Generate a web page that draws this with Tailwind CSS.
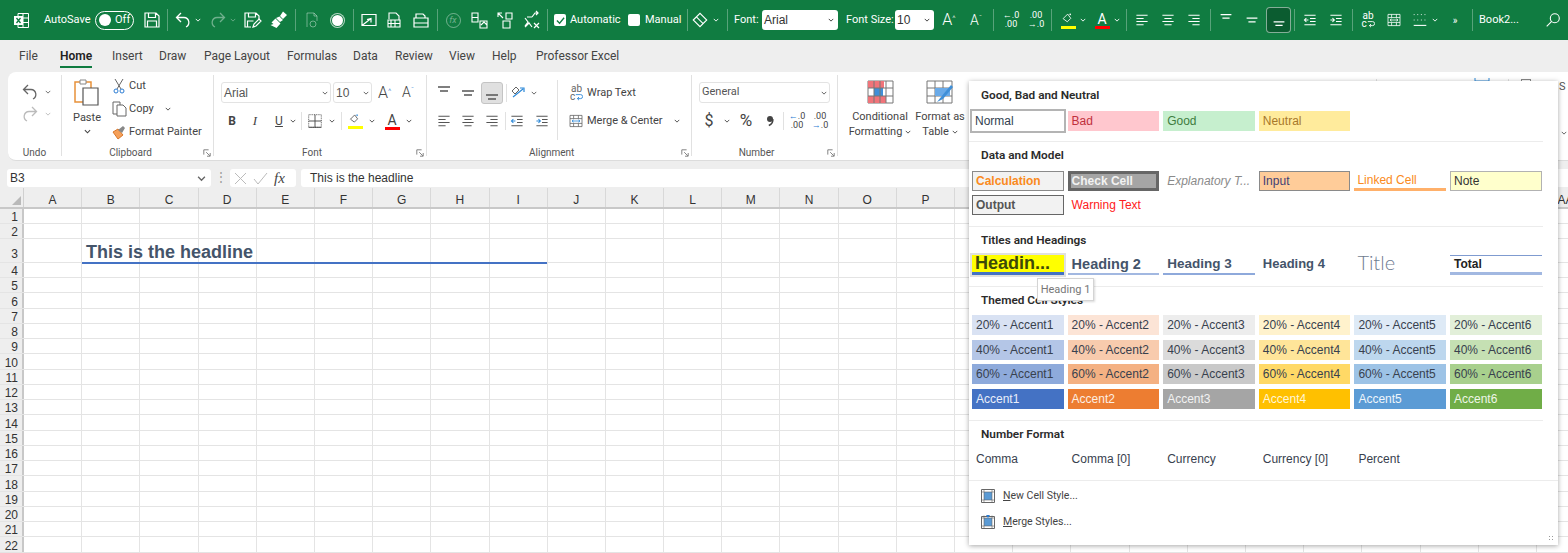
<!DOCTYPE html>
<html lang="en">
<head>
<meta charset="UTF-8" />
<title>Excel - Cell Styles</title>
<script src="https://cdn.jsdelivr.net/npm/@tailwindcss/browser@4"></script>
</head>
<body class="w-[1568px] h-[553px] overflow-hidden bg-[#eeeeee] font-['Roboto',sans-serif] text-[12px] text-[#444] [--accent:#2b88d8]">

<!-- shared icons -->
<svg class="hidden">
  <symbol id="undo" viewBox="0 0 20 20"><path d="M8 3 3.500 7.500 8 12M4 7.500h7a5 5 0 0 1 2 9.500" fill="none" stroke="currentColor" stroke-width="1.300"/></symbol>
  <symbol id="redo" viewBox="0 0 20 20"><path d="M12 3l4.500 4.500L12 12M16 7.500H9a5 5 0 0 0-2 9.500" fill="none" stroke="currentColor" stroke-width="1.300"/></symbol>
  <symbol id="chev" viewBox="0 0 8 8"><path d="M1 2.500 4 5.500 7 2.500" fill="none" stroke="currentColor" stroke-width="1.200"/></symbol>
  <symbol id="save" viewBox="0 0 20 20"><path d="M3 3h11l3 3v11H3zM6.500 3v4.500h7V3M5.500 17v-6h9v6" fill="none" stroke="currentColor" stroke-width="1.200"/></symbol>
  <symbol id="saveedit" viewBox="0 0 20 20"><path d="M9 17H3V3h11l3 3v3M6.500 3v4h7V3M5.500 17v-6h6" fill="none" stroke="currentColor" stroke-width="1.200"/><path d="M11 17l1-3 5-5 2 2-5 5z" fill="none" stroke="currentColor" stroke-width="1.200"/></symbol>
  <symbol id="brush" viewBox="0 0 20 20"><path d="M14 1.500l4 3.500-4 4-3-3zM10.500 6.500l3.500 3.500-3 2-4-4z" fill="currentColor"/><path d="M6.500 8.500l5 5-4 4.500-6-3 3-1-2-1.500z" fill="currentColor"/></symbol>
  <symbol id="docclip" viewBox="0 0 20 20"><path d="M5 17V3h7l3 3v5M12 3v3h3" fill="none" stroke="currentColor"/><circle cx="11" cy="14" r="3" fill="none" stroke="currentColor"/></symbol>
  <symbol id="envelope" viewBox="0 0 20 20"><path d="M3 4.500h14v11H3zM3 15.500l9-7M8 9.500l4-1 0 4" fill="none" stroke="currentColor" stroke-width="1.200"/></symbol>
  <symbol id="sheetclip" viewBox="0 0 20 20"><path d="M5 9V3h7l3 3v4M4 10h12v7H4zM7 10v7M4 13.500h12M11 10v7" fill="none" stroke="currentColor" stroke-width="1.100"/></symbol>
  <symbol id="tray" viewBox="0 0 20 20"><path d="M3 8h14v9H3zM5 8V4h7l2 2v2M3 13h14" fill="none" stroke="currentColor" stroke-width="1.200"/></symbol>
  <symbol id="tracea" viewBox="0 0 20 20"><path d="M3 3h6v9H3zM3 7.500h6M11 11h7v7h-7zM12 15l3-3 3 3" fill="none" stroke="currentColor" stroke-width="1.100"/></symbol>
  <symbol id="traceb" viewBox="0 0 20 20"><path d="M11 3h6v6h-6zM8 11h7v7H8zM3 3l5 5M3 7V3h4" fill="none" stroke="currentColor" stroke-width="1.100"/></symbol>
  <symbol id="fxarrow" viewBox="0 0 20 20"><path d="M5 7h5M10 7l3-4h3M14 1l2 2-2 2M3 17l4-4 3 4M3 8l3 4-3 4" fill="none" stroke="currentColor" stroke-width="1.200"/><path d="M12 13l5 5M17 13l-5 5" stroke="currentColor" stroke-width="1.200"/></symbol>
  <symbol id="eraser" viewBox="0 0 20 20"><path d="M2.500 10 10 2.500 17.500 10 10 17.500zM6 6.500 13.500 14" fill="none" stroke="currentColor" stroke-width="1.200"/></symbol>
  <symbol id="alt" viewBox="0 0 20 20"><path d="M4 4h12M6 8h8" stroke="currentColor" stroke-width="1.300"/></symbol>
  <symbol id="alm" viewBox="0 0 20 20"><path d="M4 8h12M6 12h8" stroke="currentColor" stroke-width="1.300"/></symbol>
  <symbol id="alb" viewBox="0 0 20 20"><path d="M4 12h12M6 16h8" stroke="currentColor" stroke-width="1.300"/></symbol>
  <symbol id="all" viewBox="0 0 20 20"><path d="M3 4h14M3 8h9M3 12h14M3 16h9" stroke="currentColor" stroke-width="1.300"/></symbol>
  <symbol id="alc" viewBox="0 0 20 20"><path d="M3 4h14M5.500 8h9M3 12h14M5.500 16h9" stroke="currentColor" stroke-width="1.300"/></symbol>
  <symbol id="alr" viewBox="0 0 20 20"><path d="M3 4h14M8 8h9M3 12h14M8 16h9" stroke="currentColor" stroke-width="1.300"/></symbol>
  <symbol id="outdent" viewBox="0 0 20 20"><path d="M3 4h14M10 8h7M10 12h7M3 16h14" stroke="currentColor" stroke-width="1.300"/><path d="M3 10h5M5.500 7.500 3 10l2.500 2.500" fill="none" stroke="var(--accent)" stroke-width="1.300"/></symbol>
  <symbol id="indent" viewBox="0 0 20 20"><path d="M3 4h14M10 8h7M10 12h7M3 16h14" stroke="currentColor" stroke-width="1.300"/><path d="M3 10h5M5.500 7.500 8 10l-2.500 2.500" fill="none" stroke="var(--accent)" stroke-width="1.300"/></symbol>
  <symbol id="merge" viewBox="0 0 20 20"><path d="M2.500 3h15v14h-15zM2.500 7h15M2.500 13h15M7 3v4M13 3v4M7 13v4M13 13v4" fill="none" stroke="currentColor"/><path d="M5 10h10M7 8.500 5 10l2 1.500M13 8.500l2 1.500-2 1.500" fill="none" stroke="var(--accent)"/></symbol>
  <symbol id="wraparrow" viewBox="0 0 10 10"><path d="M1 2h6a2 2 0 0 1 0 5H3M5 5 3 7l2 2" fill="none" stroke="var(--accent)" stroke-width="1.100"/></symbol>
  <symbol id="borders" viewBox="0 0 20 20"><path d="M3 3h14v14H3z" fill="none" stroke="currentColor" stroke-dasharray="1 1"/><path d="M3 10h14M10 3v14M3 17h14" fill="none" stroke="currentColor"/></symbol>
  <symbol id="dotted" viewBox="0 0 20 20"><path d="M3 4h14M3 10h14" fill="none" stroke="currentColor" stroke-dasharray="1 3"/><path d="M3 16h14" stroke="currentColor" stroke-width="1.200"/></symbol>
  <symbol id="bucket" viewBox="0 0 20 20"><path d="M3 9.500 9.500 3 14 9l-5 5z" fill="none" stroke="currentColor" stroke-width="1.200"/><path d="M11 3l3-1 .5 3z" fill="var(--accent)"/></symbol>
  <symbol id="search" viewBox="0 0 20 20"><circle cx="12" cy="8" r="5" fill="none" stroke="currentColor" stroke-width="1.200"/><path d="M8.500 11.500 3 17" stroke="currentColor" stroke-width="1.200"/></symbol>
  <symbol id="launch" viewBox="0 0 10 10"><path d="M1 7V1h6M4 4l4.500 4.500M5 9h4V5" fill="none" stroke="currentColor"/></symbol>
</svg>

<!-- quick access bar -->
<div class="h-[40px] bg-[#107c41] text-white flex items-center text-[11px] whitespace-nowrap [--accent:#ffffff]">
  <div class="w-[26px] ml-[8px] flex justify-center">
    <svg class="w-[17px] h-[17px]" viewBox="0 0 17 17"><path d="M5 1.500h10.500v14H5z" fill="none" stroke="white"/><path d="M10 2v13M5 6h10M5 10.500h10" stroke="white"/><rect x="1" y="4" width="9" height="9" fill="white"/><path d="M3.500 6 7.500 11M7.500 6l-4 5" stroke="#107c41" stroke-width="1.300"/></svg>
  </div>
  <span class="w-[45px] ml-[10px]">AutoSave</span>
  <div class="w-[39px] h-[19px] ml-[6px] rounded-full border border-white flex items-center pl-[3px] gap-[4px]"><span class="w-[12px] h-[12px] rounded-full bg-white"></span><span class="text-[11px]">Off</span></div>
  <svg class="w-[24px] h-[20px] ml-[6px]"><use href="#save"/></svg>
  <span class="w-px h-[22px] ml-[3px] bg-white/30"></span>
  <svg class="w-[24px] h-[20px] ml-[3px]"><use href="#undo"/></svg>
  <svg class="w-[6px] h-[6px]"><use href="#chev"/></svg>
  <svg class="w-[24px] h-[20px] ml-[5px] text-white/40"><use href="#redo"/></svg>
  <svg class="w-[6px] h-[6px] text-white/40"><use href="#chev"/></svg>
  <svg class="w-[24px] h-[20px] ml-[4px]"><use href="#saveedit"/></svg>
  <svg class="w-[24px] h-[20px] ml-[3px]"><use href="#brush"/></svg>
  <span class="w-px h-[22px] ml-[4px] bg-white/30"></span>
  <svg class="w-[24px] h-[20px] ml-[4px] text-white/40"><use href="#docclip"/></svg>
  <div class="w-[24px] ml-[1px] flex justify-center"><span class="w-[11px] h-[11px] rounded-full bg-white ring-1 ring-white/70 ring-offset-1 ring-offset-[#107c41]"></span></div>
  <span class="w-px h-[22px] ml-[4px] bg-white/30"></span>
  <svg class="w-[24px] h-[20px] ml-[3px]"><use href="#envelope"/></svg>
  <svg class="w-[24px] h-[20px] ml-[1px]"><use href="#sheetclip"/></svg>
  <svg class="w-[24px] h-[20px] ml-[3px]"><use href="#tray"/></svg>
  <span class="w-px h-[22px] ml-[4px] bg-white/30"></span>
  <div class="w-[24px] ml-[3px] flex justify-center"><span class="w-[15px] h-[15px] rounded-full border border-white/40 text-white/40 text-[9px] italic leading-[13px] text-center">fx</span></div>
  <svg class="w-[24px] h-[20px] ml-[2px]"><use href="#tracea"/></svg>
  <svg class="w-[24px] h-[20px] ml-[2px]"><use href="#traceb"/></svg>
  <svg class="w-[24px] h-[20px] ml-[3px]"><use href="#fxarrow"/></svg>
  <span class="w-px h-[22px] ml-[3px] bg-white/30"></span>
  <div class="w-[12px] h-[12px] ml-[6px] bg-white rounded-[2px] flex items-center justify-center"><svg class="w-[9px] h-[9px]" viewBox="0 0 10 10"><path d="M1 5l3 3 5-6" fill="none" stroke="#107c41" stroke-width="1.500"/></svg></div>
  <span class="w-[50px] ml-[4px]">Automatic</span>
  <div class="w-[12px] h-[12px] ml-[8px] bg-white rounded-[2px]"></div>
  <span class="w-[34px] ml-[5px]">Manual</span>
  <span class="w-px h-[22px] ml-[8px] bg-white/30"></span>
  <svg class="w-[24px] h-[18px]"><use href="#eraser"/></svg>
  <svg class="w-[6px] h-[6px] ml-[1px]"><use href="#chev"/></svg>
  <span class="w-px h-[22px] ml-[8px] bg-white/30"></span>
  <span class="w-[28px] ml-[6px]">Font:</span>
  <div class="w-[76px] h-[20px] bg-white rounded-[3px] flex items-center justify-between px-[2px] text-[12px] text-[#333] font-['Liberation_Sans',sans-serif]">Arial<svg class="w-[6px] h-[6px] mr-[2px]"><use href="#chev"/></svg></div>
  <span class="w-[46px] ml-[8px]">Font Size:</span>
  <div class="w-[39px] h-[20px] ml-[3px] bg-white rounded-[3px] flex items-center justify-between px-[2px] text-[12px] text-[#333] font-['Liberation_Sans',sans-serif]">10<svg class="w-[6px] h-[6px] mr-[2px]"><use href="#chev"/></svg></div>
  <span class="w-[24px] ml-[3px] text-center text-[16px] font-light">A<sup class="text-[8px]">^</sup></span>
  <span class="w-[24px] ml-[3px] text-center text-[14px] font-light">A<sup class="text-[8px]">ˇ</sup></span>
  <span class="w-px h-[22px] ml-[5px] bg-white/30"></span>
  <span class="w-[24px] ml-[5px] text-center text-[9px] leading-[9px]">←.0<br>.00</span>
  <span class="w-[24px] ml-[1px] text-center text-[9px] leading-[9px]">.00<br>→.0</span>
  <span class="w-px h-[22px] ml-[3px] bg-white/30"></span>
  <div class="w-[24px] ml-[4px] flex flex-col items-center"><svg class="w-[14px] h-[14px]"><use href="#bucket"/></svg><span class="w-[15px] h-[3px] bg-[#ffff00]"></span></div>
  <svg class="w-[6px] h-[6px]"><use href="#chev"/></svg>
  <div class="w-[24px] ml-[4px] flex flex-col items-center leading-[14px] text-[14px]">A<span class="w-[15px] h-[3px] bg-[#ff0000]"></span></div>
  <svg class="w-[6px] h-[6px]"><use href="#chev"/></svg>
  <span class="w-px h-[22px] ml-[6px] bg-white/30"></span>
  <svg class="w-[24px] h-[16px] ml-[3px]"><use href="#all"/></svg>
  <svg class="w-[24px] h-[16px] ml-[2px]"><use href="#alc"/></svg>
  <svg class="w-[24px] h-[16px] ml-[2px]"><use href="#alr"/></svg>
  <span class="w-px h-[22px] ml-[4px] bg-white/30"></span>
  <svg class="w-[24px] h-[18px] ml-[3px]"><use href="#alt"/></svg>
  <svg class="w-[24px] h-[18px] ml-[2px]"><use href="#alm"/></svg>
  <div class="w-[25px] h-[26px] ml-[2px] rounded-[4px] bg-[#0b5c30] border border-white/50 flex items-center justify-center"><svg class="w-[20px] h-[18px]"><use href="#alb"/></svg></div>
  <span class="w-px h-[22px] ml-[3px] bg-white/30"></span>
  <svg class="w-[24px] h-[16px] ml-[3px]"><use href="#outdent"/></svg>
  <svg class="w-[24px] h-[16px] ml-[2px]"><use href="#indent"/></svg>
  <span class="w-px h-[22px] ml-[4px] bg-white/30"></span>
  <div class="w-[24px] ml-[3px] text-center text-[10px] leading-[8px]">ab<br>c<svg class="inline w-[8px] h-[8px]"><use href="#wraparrow"/></svg></div>
  <svg class="w-[24px] h-[16px] ml-[2px]"><use href="#merge"/></svg>
  <svg class="w-[24px] h-[18px] ml-[2px]"><use href="#dotted"/></svg>
  <svg class="w-[6px] h-[6px]"><use href="#chev"/></svg>
  <span class="w-[16px] ml-[9px] text-center text-[10px]">»</span>
  <span class="w-px h-[22px] ml-[9px] bg-white/30"></span>
  <span class="w-[40px] ml-[6px]">Book2...</span>
  <svg class="w-[24px] h-[18px] ml-[22px]"><use href="#search"/></svg>
</div>

<!-- tabs -->
<div class="h-[32px] flex items-center text-[12px] text-[#444] whitespace-nowrap">
  <span class="ml-[19px] w-[41px]">File</span>
  <span class="w-[52px]"><span class="inline-block font-semibold text-[#222] relative">Home<span class="absolute left-0 right-0 top-[19px] h-[2px] bg-[#107c41]"></span></span></span>
  <span class="w-[47px]">Insert</span>
  <span class="w-[45px]">Draw</span>
  <span class="w-[83px]">Page Layout</span>
  <span class="w-[66px]">Formulas</span>
  <span class="w-[42px]">Data</span>
  <span class="w-[54px]">Review</span>
  <span class="w-[43px]">View</span>
  <span class="w-[44px]">Help</span>
  <span>Professor Excel</span>
</div>

<!-- ribbon -->
<div class="ml-[8px] h-[89px] bg-white rounded-l-[8px] border-b border-[#dcdcdc] flex pt-[3px] pb-[4px] text-[11px] whitespace-nowrap">
  <!-- undo -->
  <div class="w-[54px] border-r border-[#e1e1e1] flex flex-col">
    <div class="h-[6px]"></div>
    <div class="flex items-center h-[22px] pl-[12px] text-[#666]"><svg class="w-[20px] h-[20px]"><use href="#undo"/></svg><svg class="w-[6px] h-[6px] ml-[5px]"><use href="#chev"/></svg></div>
    <div class="flex items-center h-[22px] pl-[12px] text-[#bbb]"><svg class="w-[20px] h-[20px]"><use href="#redo"/></svg><svg class="w-[6px] h-[6px] ml-[5px]"><use href="#chev"/></svg></div>
    <div class="mt-auto mb-[-5px] text-center text-[10px] leading-[16px] text-[#555]">Undo</div>
  </div>
  <!-- clipboard -->
  <div class="w-[152px] border-r border-[#e1e1e1] flex flex-col relative">
    <div class="flex flex-1">
      <div class="w-[50px] flex flex-col items-center pt-[3px]">
        <svg class="w-[28px] h-[28px]" viewBox="0 0 28 28"><path d="M2 4h16v20H2z" fill="#fff" stroke="#e8913a" stroke-width="1.500"/><path d="M7 2h6v4H7z" fill="#fff" stroke="#888"/><path d="M10 10h15v17H10z" fill="#fff" stroke="#555" stroke-width="1.200"/></svg>
        <span class="mt-[4px] leading-[16px]">Paste</span>
        <svg class="w-[7px] h-[7px] mt-[2px]"><use href="#chev"/></svg>
      </div>
      <div class="flex flex-col pt-[3px] gap-[7px]">
        <div class="flex items-center h-[16px]"><svg class="w-[14px] h-[16px] text-[#666]" viewBox="0 0 14 16"><path d="M3 1l6 10M11 1 5 11" stroke="currentColor"/><circle cx="4" cy="13" r="2" fill="none" stroke="#2b7cd3"/><circle cx="10" cy="13" r="2" fill="none" stroke="#2b7cd3"/></svg><span class="ml-[3px]">Cut</span></div>
        <div class="flex items-center h-[16px]"><svg class="w-[15px] h-[16px] text-[#666]" viewBox="0 0 15 16"><path d="M1 1h7v12H1z" fill="none" stroke="currentColor"/><path d="M5 4h6l3 3v8H5z" fill="#fff" stroke="currentColor"/></svg><span class="ml-[2px]">Copy</span><svg class="w-[6px] h-[6px] ml-[11px]"><use href="#chev"/></svg></div>
        <div class="flex items-center h-[16px]"><svg class="w-[15px] h-[16px]" viewBox="0 0 15 16"><path d="M1 8l5-3 5 6-5 4z" fill="#f5a05a" stroke="#d9772a"/><path d="M6 6l5-4 2 2-3 5z" fill="#888"/></svg><span class="ml-[2px]">Format Painter</span></div>
      </div>
    </div>
    <div class="mb-[-5px] text-center text-[10px] leading-[16px] text-[#555] pr-[14px]">Clipboard</div>
    <svg class="absolute right-[2px] bottom-[-1px] w-[8px] h-[8px] text-[#666]"><use href="#launch"/></svg>
  </div>
  <!-- font -->
  <div class="w-[213px] border-r border-[#e1e1e1] flex flex-col relative pl-[7px]">
    <div class="flex items-center mt-[7px] h-[21px]">
      <div class="w-[110px] h-[21px] rounded-[3px] border border-[#e3e3e3] flex items-center justify-between px-[2px] font-['Liberation_Sans',sans-serif] text-[12px] text-[#555]">Arial<svg class="w-[6px] h-[6px]"><use href="#chev"/></svg></div>
      <div class="w-[39px] h-[21px] ml-[2px] rounded-[3px] border border-[#e3e3e3] flex items-center justify-between px-[2px] font-['Liberation_Sans',sans-serif] text-[12px] text-[#555]">10<svg class="w-[6px] h-[6px]"><use href="#chev"/></svg></div>
      <span class="ml-[6px] text-[16px] w-[20px] font-light">A<sup class="text-[8px] text-[#2b7cd3]">^</sup></span>
      <span class="ml-[4px] text-[14px] w-[18px] font-light">A<sup class="text-[8px] text-[#2b7cd3]">ˇ</sup></span>
    </div>
    <div class="flex items-center mt-[8px] h-[20px] text-[#444]">
      <span class="w-[22px] text-center font-bold text-[12px]">B</span>
      <span class="w-[22px] ml-[1px] text-center italic text-[13px] font-['Liberation_Serif',serif]">I</span>
      <span class="w-[22px] ml-[2px] text-center underline text-[12px]">U</span>
      <svg class="w-[6px] h-[6px]"><use href="#chev"/></svg>
      <span class="w-px h-[18px] ml-[5px] bg-[#e1e1e1]"></span>
      <svg class="w-[18px] h-[18px] ml-[4px]"><use href="#borders"/></svg>
      <svg class="w-[6px] h-[6px] ml-[5px]"><use href="#chev"/></svg>
      <span class="w-px h-[18px] ml-[6px] bg-[#e1e1e1]"></span>
      <div class="w-[18px] ml-[4px] flex flex-col items-center"><svg class="w-[14px] h-[13px]"><use href="#bucket"/></svg><span class="w-[15px] h-[3px] bg-[#ffff00]"></span></div>
      <svg class="w-[6px] h-[6px] ml-[5px]"><use href="#chev"/></svg>
      <div class="w-[18px] ml-[8px] flex flex-col items-center leading-[14px] text-[14px]">A<span class="w-[15px] h-[3px] bg-[#ff0000]"></span></div>
      <svg class="w-[6px] h-[6px] ml-[5px]"><use href="#chev"/></svg>
    </div>
    <div class="mt-auto mb-[-5px] text-center text-[10px] leading-[16px] text-[#555] pr-[23px]">Font</div>
    <svg class="absolute right-[2px] bottom-[-1px] w-[8px] h-[8px] text-[#666]"><use href="#launch"/></svg>
  </div>
  <!-- alignment -->
  <div class="w-[265px] border-r border-[#e1e1e1] flex flex-col relative">
    <div class="flex flex-1">
      <div class="w-[130px] flex flex-col text-[#555] pl-[7px]">
        <div class="flex items-center mt-[7px] h-[22px]">
          <svg class="w-[20px] h-[20px]"><use href="#alt"/></svg>
          <svg class="w-[20px] h-[20px] ml-[4px]"><use href="#alm"/></svg>
          <div class="w-[22px] h-[22px] ml-[3px] rounded-[3px] bg-[#e0e0e0] border border-[#c4c4c4] flex items-center justify-center"><svg class="w-[20px] h-[20px]"><use href="#alb"/></svg></div>
          <span class="w-px h-[18px] ml-[3px] bg-[#e1e1e1]"></span>
          <svg class="w-[18px] h-[18px] ml-[3px]" viewBox="0 0 18 18"><path d="M3 13 13 5M10 4h4v4" fill="none" stroke="#2b88d8" stroke-width="1.200"/><path d="M2 7l4-4 3 3-4 4z" fill="none" stroke="#666"/></svg>
          <svg class="w-[6px] h-[6px] ml-[3px]"><use href="#chev"/></svg>
        </div>
        <div class="flex items-center mt-[7px] h-[20px]">
          <svg class="w-[20px] h-[16px]"><use href="#all"/></svg>
          <svg class="w-[20px] h-[16px] ml-[4px]"><use href="#alc"/></svg>
          <svg class="w-[20px] h-[16px] ml-[4px]"><use href="#alr"/></svg>
          <span class="w-px h-[18px] ml-[3px] bg-[#e1e1e1]"></span>
          <svg class="w-[20px] h-[16px] ml-[1px]"><use href="#outdent"/></svg>
          <svg class="w-[20px] h-[16px] ml-[5px]"><use href="#indent"/></svg>
        </div>
      </div>
      <div class="w-px h-[60px] mt-[5px] bg-[#e1e1e1]"></div>
      <div class="flex flex-col pl-[10px] pt-[7px]">
        <div class="flex items-center h-[22px]"><span class="w-[17px] text-[10px] leading-[8px] text-center text-[#666]">ab<br>c<svg class="inline w-[8px] h-[8px]"><use href="#wraparrow"/></svg></span><span class="ml-[2px]">Wrap Text</span></div>
        <div class="flex items-center h-[20px] mt-[7px]"><svg class="w-[16px] h-[16px] text-[#666]"><use href="#merge"/></svg><span class="ml-[3px]">Merge &amp; Center</span><svg class="w-[6px] h-[6px] ml-[11px]"><use href="#chev"/></svg></div>
      </div>
    </div>
    <div class="mb-[-5px] text-[10px] leading-[16px] text-[#555] pl-[102px]">Alignment</div>
    <svg class="absolute right-[2px] bottom-[-1px] w-[8px] h-[8px] text-[#666]"><use href="#launch"/></svg>
  </div>
  <!-- number -->
  <div class="w-[146px] border-r border-[#e1e1e1] flex flex-col relative pl-[7px]">
    <div class="w-[131px] h-[21px] mt-[7px] rounded-[3px] border border-[#e3e3e3] flex items-center justify-between px-[2px] text-[#555]">General<svg class="w-[6px] h-[6px]"><use href="#chev"/></svg></div>
    <div class="flex items-center mt-[8px] h-[20px] text-[#444]">
      <span class="w-[20px] text-center text-[16px]">$</span>
      <svg class="w-[6px] h-[6px] ml-[5px]"><use href="#chev"/></svg>
      <span class="w-[20px] ml-[6px] text-center text-[17px]">%</span>
      <svg class="w-[20px] h-[16px] ml-[4px]" viewBox="0 0 20 16"><circle cx="10" cy="6" r="3" fill="#444"/><path d="M12.800 6c.4 3-1.500 5.500-4 6.500" fill="none" stroke="#444" stroke-width="1.500"/></svg>
      <span class="w-px h-[18px] ml-[3px] bg-[#e1e1e1]"></span>
      <span class="w-[20px] ml-[3px] text-center text-[9px] leading-[9px]"><span class="text-[#2b7cd3]">←</span>.0<br>.00</span>
      <span class="w-[20px] ml-[3px] text-center text-[9px] leading-[9px]">.00<br><span class="text-[#2b7cd3]">→</span>.0</span>
    </div>
    <div class="mt-auto mb-[-5px] text-center text-[10px] leading-[16px] text-[#555] pr-[23px]">Number</div>
    <svg class="absolute right-[2px] bottom-[-1px] w-[8px] h-[8px] text-[#666]"><use href="#launch"/></svg>
  </div>
  <!-- styles, mostly covered by the gallery -->
  <div class="flex pt-[4px] text-[11px] leading-[15px]">
    <div class="w-[84px] flex flex-col items-center">
      <svg class="w-[27px] h-[24px] mt-[1px]" viewBox="0 0 27 24"><path d="M1 1h25v22H1z" fill="#fff" stroke="#777"/><path d="M1 1h16v7H1zM1 16h18v7H1z" fill="#f0747a"/><path d="M7 8h9v8H7z" fill="#3f8fd8"/><path d="M7 1v22M13 1v22M19 1v22M1 8h25M1 16h25" stroke="#777"/></svg>
      <span class="mt-[5px]">Conditional</span>
      <span class="flex items-center gap-[3px]">Formatting<svg class="w-[6px] h-[6px]"><use href="#chev"/></svg></span>
    </div>
    <div class="w-[36px] flex flex-col items-center">
      <svg class="w-[28px] h-[24px] mt-[1px]" viewBox="0 0 28 24"><path d="M1 1h25v22H1zM1 8h25M1 16h25M9 1v22M17 1v22" fill="#fff" stroke="#777"/><path d="M9 8h15v8H9z" fill="#6aaae8"/><path d="M11 22l4-5 10-12 2 2-10 12z" fill="#3f8fd8"/></svg>
      <span class="mt-[5px]">Format as</span>
      <span class="flex items-center gap-[3px]">Table<svg class="w-[6px] h-[6px]"><use href="#chev"/></svg></span>
    </div>
    <div class="w-px h-[80px] ml-[418px] bg-[#e1e1e1]"></div>
    <div class="w-[113px] flex justify-end"><svg class="w-[16px] h-[6px] mt-[-1px] text-[#2b88d8]" viewBox="0 0 16 6"><path d="M1 3h14M1 0v6M15 0v6" stroke="currentColor"/></svg></div>
    <div class="w-px h-[80px] ml-[18px] bg-[#e1e1e1]"></div>
    <div class="w-[10px] h-[5px] ml-[12px] border border-[#888]"></div>
    <div class="ml-[28px] flex flex-col text-[#555] gap-[36px]"><span>S</span><svg class="w-[6px] h-[6px] ml-[2px]"><use href="#chev"/></svg></div>
  </div>
</div>

<!-- formula bar -->
<div class="h-[27px] pt-[8px] flex text-[12px] font-['Liberation_Sans',sans-serif]">
  <div class="w-[204px] h-[18px] ml-[7px] bg-white rounded-[3px] flex items-center justify-between px-[3px] text-[#333]">B3<svg class="w-[9px] h-[9px] mr-[2px] text-[#666]"><use href="#chev"/></svg></div>
  <div class="w-[19px] text-center text-[#999] leading-[16px]">⋮</div>
  <div class="w-[66px] h-[18px] bg-white rounded-[3px] flex items-center px-[4px] gap-[6px]">
    <svg class="w-[13px] h-[13px] text-[#bbb]" viewBox="0 0 13 13"><path d="M1 1l11 11M12 1 1 12" stroke="currentColor"/></svg>
    <svg class="w-[15px] h-[13px] text-[#bbb]" viewBox="0 0 15 13"><path d="M1 7l4 5 9-11" fill="none" stroke="currentColor"/></svg>
    <span class="font-['Liberation_Serif',serif] italic text-[15px] text-[#444]">fx</span>
  </div>
  <div class="flex-1 h-[18px] ml-[5px] bg-white rounded-l-[3px] pl-[9px] leading-[19px] text-[#333]">This is the headline</div>
</div>

<!-- sheet, built from data -->
<div id="sheet" class="relative h-[365px] font-['Liberation_Sans',sans-serif] text-[12px] overflow-hidden bg-white"></div>

<!-- cell styles gallery -->
<div class="absolute left-[969px] top-[81px] w-[589px] h-[464px] bg-white shadow-[0_1px_5px_rgba(0,0,0,0.35)] z-10 text-[#2b2b2b]">
  <div class="h-[61px] w-[574px] border-b border-[#ececec] pt-[6px]">
    <div class="h-[16px] pl-[12px] font-semibold text-[11.800px] leading-[16px]">Good, Bad and Neutral</div>
    <div class="mt-[8px] pl-[3px] grid grid-cols-[repeat(6,91.6px)] gap-x-[4px] gap-y-[4.600px] font-['Liberation_Sans',sans-serif] text-[12px] leading-[20px] text-[#333f50]">
      <div class="h-[20px] pl-[3px] bg-white outline-2 outline-[#b4b4b4]">Normal</div>
      <div class="h-[20px] pl-[4px] bg-[#ffc7ce] text-[#c0303c]">Bad</div>
      <div class="h-[20px] pl-[4px] bg-[#c6efce] text-[#3f7d3f]">Good</div>
      <div class="h-[20px] pl-[4px] bg-[#ffeb9c] text-[#a8782a]">Neutral</div>
    </div>
  </div>
  <div class="h-[85px] w-[574px] border-b border-[#ececec] pt-[5px]">
    <div class="h-[16px] pl-[12px] font-semibold text-[11.800px] leading-[16px]">Data and Model</div>
    <div class="mt-[8px] pl-[3px] grid grid-cols-[repeat(6,91.6px)] gap-x-[4px] gap-y-[4px] font-['Liberation_Sans',sans-serif] text-[12px] leading-[18px]">
      <div class="h-[20px] pl-[3px] bg-[#f2f2f2] border border-[#8a8a8a] font-bold text-[#fa8a20]">Calculation</div>
      <div class="h-[20px] pl-[1px] bg-[#a5a5a5] border-[3px] border-[#666] font-bold text-[#f2f2f2] leading-[14px]">Check Cell</div>
      <div class="h-[20px] pl-[4px] italic text-[#8a8a8a] leading-[20px]">Explanatory T...</div>
      <div class="h-[20px] pl-[3px] bg-[#ffcc99] border border-[#8a8a8a] text-[#3f3f76]">Input</div>
      <div class="h-[20px] pl-[3px] border-b-[3px] border-[#ffb06a] text-[#fa8a20]">Linked Cell</div>
      <div class="h-[20px] pl-[3px] bg-[#ffffcc] border border-[#b2b2b2] text-[#333]">Note</div>
      <div class="h-[20px] pl-[3px] bg-[#f2f2f2] border border-[#666] font-bold text-[#555]">Output</div>
      <div class="h-[20px] pl-[4px] text-[#ff2020] leading-[20px]">Warning Text</div>
    </div>
  </div>
  <div class="h-[60px] w-[574px] border-b border-[#ececec] pt-[5px]">
    <div class="h-[16px] pl-[12px] font-semibold text-[11.800px] leading-[16px]">Titles and Headings</div>
    <div class="mt-[7px] pl-[3px] grid grid-cols-[repeat(6,91.6px)] gap-x-[4px] font-['Liberation_Sans',sans-serif] font-bold text-[#44546a]">
      <div class="h-[20px] outline-2 outline-[#e0e0e0] border-b-[3px] border-[#4472c4] pl-[3px] bg-[#ffff00] text-[18px] leading-[16px] text-[#3d4a08]">Headin...</div>
      <div class="h-[20px] border-b-2 border-[#a2b8e1] pl-[4px] text-[14.500px] leading-[18px]">Heading 2</div>
      <div class="h-[20px] border-b-2 border-[#8ea9db] pl-[4px] text-[13.500px] leading-[18px]">Heading 3</div>
      <div class="h-[20px] pl-[4px] text-[13px] leading-[18px]">Heading 4</div>
      <div class="h-[20px] pl-[3px] font-['Lato',sans-serif] font-light text-[20px] leading-[15px] text-[#6f7c90]">Title</div>
      <div class="h-[20px] border-t border-b-[3px] border-t-[#7f9bd0] border-b-[#a2b8e1] pl-[4px] text-[12px] leading-[17px] text-[#222]">Total</div>
    </div>
  </div>
  <div class="h-[134px] w-[574px] border-b border-[#ececec] pt-[5px]">
    <div class="h-[16px] pl-[12px] font-semibold text-[11.800px] leading-[16px]">Themed Cell Styles</div>
    <div class="mt-[7px] pl-[3px] grid grid-cols-[repeat(6,91.6px)] gap-x-[4px] gap-y-[4.700px] font-['Liberation_Sans',sans-serif] text-[12px] leading-[20px] text-[#38414e]">
      <div class="h-[20px] pl-[4px] bg-[#d9e2f3]">20% - Accent1</div>
      <div class="h-[20px] pl-[4px] bg-[#fce4d6]">20% - Accent2</div>
      <div class="h-[20px] pl-[4px] bg-[#ededed]">20% - Accent3</div>
      <div class="h-[20px] pl-[4px] bg-[#fff2cc]">20% - Accent4</div>
      <div class="h-[20px] pl-[4px] bg-[#deeaf6]">20% - Accent5</div>
      <div class="h-[20px] pl-[4px] bg-[#e2efd9]">20% - Accent6</div>
      <div class="h-[20px] pl-[4px] bg-[#b4c6e7]">40% - Accent1</div>
      <div class="h-[20px] pl-[4px] bg-[#f8cbad]">40% - Accent2</div>
      <div class="h-[20px] pl-[4px] bg-[#dbdbdb]">40% - Accent3</div>
      <div class="h-[20px] pl-[4px] bg-[#ffe599]">40% - Accent4</div>
      <div class="h-[20px] pl-[4px] bg-[#bdd7ee]">40% - Accent5</div>
      <div class="h-[20px] pl-[4px] bg-[#c5e0b3]">40% - Accent6</div>
      <div class="h-[20px] pl-[4px] bg-[#8eaadb]">60% - Accent1</div>
      <div class="h-[20px] pl-[4px] bg-[#f4b183]">60% - Accent2</div>
      <div class="h-[20px] pl-[4px] bg-[#c9c9c9]">60% - Accent3</div>
      <div class="h-[20px] pl-[4px] bg-[#ffd966]">60% - Accent4</div>
      <div class="h-[20px] pl-[4px] bg-[#9dc3e6]">60% - Accent5</div>
      <div class="h-[20px] pl-[4px] bg-[#a8d08d]">60% - Accent6</div>
      <div class="h-[20px] pl-[4px] bg-[#4472c4] text-[#e8eefa]">Accent1</div>
      <div class="h-[20px] pl-[4px] bg-[#ed7d31] text-[#fdeee2]">Accent2</div>
      <div class="h-[20px] pl-[4px] bg-[#a5a5a5] text-[#f2f2f2]">Accent3</div>
      <div class="h-[20px] pl-[4px] bg-[#ffc000] text-[#fff6d6]">Accent4</div>
      <div class="h-[20px] pl-[4px] bg-[#5b9bd5] text-[#eef5fb]">Accent5</div>
      <div class="h-[20px] pl-[4px] bg-[#70ad47] text-[#eef6e8]">Accent6</div>
    </div>
  </div>
  <div class="h-[60px] border-b border-[#ececec] pt-[5px]">
    <div class="h-[16px] pl-[12px] font-semibold text-[11.800px] leading-[16px]">Number Format</div>
    <div class="mt-[7px] pl-[3px] grid grid-cols-[repeat(6,91.6px)] gap-x-[4px] font-['Liberation_Sans',sans-serif] text-[12px] leading-[20px] text-[#38414e]">
      <div class="h-[20px] pl-[4px]">Comma</div>
      <div class="h-[20px] pl-[4px]">Comma [0]</div>
      <div class="h-[20px] pl-[4px]">Currency</div>
      <div class="h-[20px] pl-[4px]">Currency [0]</div>
      <div class="h-[20px] pl-[4px]">Percent</div>
    </div>
  </div>
  <div class="pt-[2px] pl-[12px] text-[10.500px] text-[#444]">
    <div class="h-[26px] flex items-center gap-[8px]"><svg class="w-[14px] h-[14px]" viewBox="0 0 14 14"><path d="M.5.5h13v13H.5z" fill="#fff" stroke="#666"/><path d="M3 3h8v8H3z" fill="#5b9bd5"/><path d="M.5 3h13M.5 11h13M3 .5v13M11 .5v13" stroke="#666" stroke-width=".6"/></svg><span><span class="underline">N</span>ew Cell Style...</span></div>
    <div class="h-[26px] flex items-center gap-[8px]"><svg class="w-[14px] h-[14px]" viewBox="0 0 14 14"><path d="M.5 1.500h13v12H.5z" fill="#fff" stroke="#666"/><path d="M3 3h8v8H3z" fill="#5b9bd5"/><path d="M.5 3h13M.5 11h13M3 .5v13M11 .5v13" stroke="#666" stroke-width=".6"/><path d="M5 0h4L7 3z" fill="#2b7cd3"/></svg><span><span class="underline">M</span>erge Styles...</span></div>
  </div>
  <!-- resize grip -->
  <div class="absolute right-[4px] bottom-[4px] w-[6px] h-[6px] bg-[radial-gradient(#999_1px,transparent_1px)] bg-[length:3px_3px]"></div>
  <!-- tooltip -->
  <div class="absolute left-[68px] top-[197px] w-[57px] h-[23px] bg-white border border-[#d4d4d4] shadow-[1px_1px_2px_rgba(0,0,0,0.15)] text-[11px] leading-[21px] text-center text-[#777]">Heading 1</div>
</div>

<script>
  // column headers and rows of the sheet; Q to Z stay blank, the gallery covers them
  const sheet = document.getElementById("sheet");
  const cols = "A B C D E F G H I J K L M N O P . . . . . . . . . . AA".split(" ");
  const heights = [15, 15, 24, 15].concat(Array(18).fill(15.25));

  let html = '<div class="flex h-[21px] bg-[#eeeeee] border-b-2 border-[#c8c8c8]">';
  html += '<div class="w-[24px] shrink-0 relative border-r border-[#d0d0d0]"><div class="absolute right-[2px] bottom-[2px] w-0 h-0 border-l-[9px] border-b-[9px] border-l-transparent border-b-[#b9b9b9]"></div></div>';
  cols.forEach(c => {
    html += '<div class="w-[58.200px] shrink-0 border-r border-[#d8d8d8] text-center leading-[25px] text-[#333]">' + (c === "." ? "" : c) + '</div>';
  });
  html += '</div>';

  heights.forEach((h, i) => {
    const nudge = i === 2 ? "" : "translate-y-[2px]";
    html += '<div class="flex border-b border-[#e4e4e4]" style="height:' + h + 'px">';
    html += '<div class="w-[24px] shrink-0 bg-[#eeeeee] border-r-2 border-[#c8c8c8] pr-[4px] text-[#333] leading-[15px] flex items-end justify-end"><span class="' + nudge + '">' + (i + 1) + '</span></div>';
    cols.forEach(() => {
      html += '<div class="w-[58.200px] shrink-0 border-r border-[#e4e4e4]"></div>';
    });
    html += '</div>';
  });
  sheet.innerHTML = html;
</script>
<!-- headline sits over the grid lines of row 3 -->
<div class="absolute left-[82px] top-[239px] w-[465px] h-[25px] border-b-2 border-[#4472c4] pl-[4px] font-['Liberation_Sans',sans-serif] font-bold text-[18px] leading-[26px] text-[#44546a]">This is the headline</div>
</body>
</html>
